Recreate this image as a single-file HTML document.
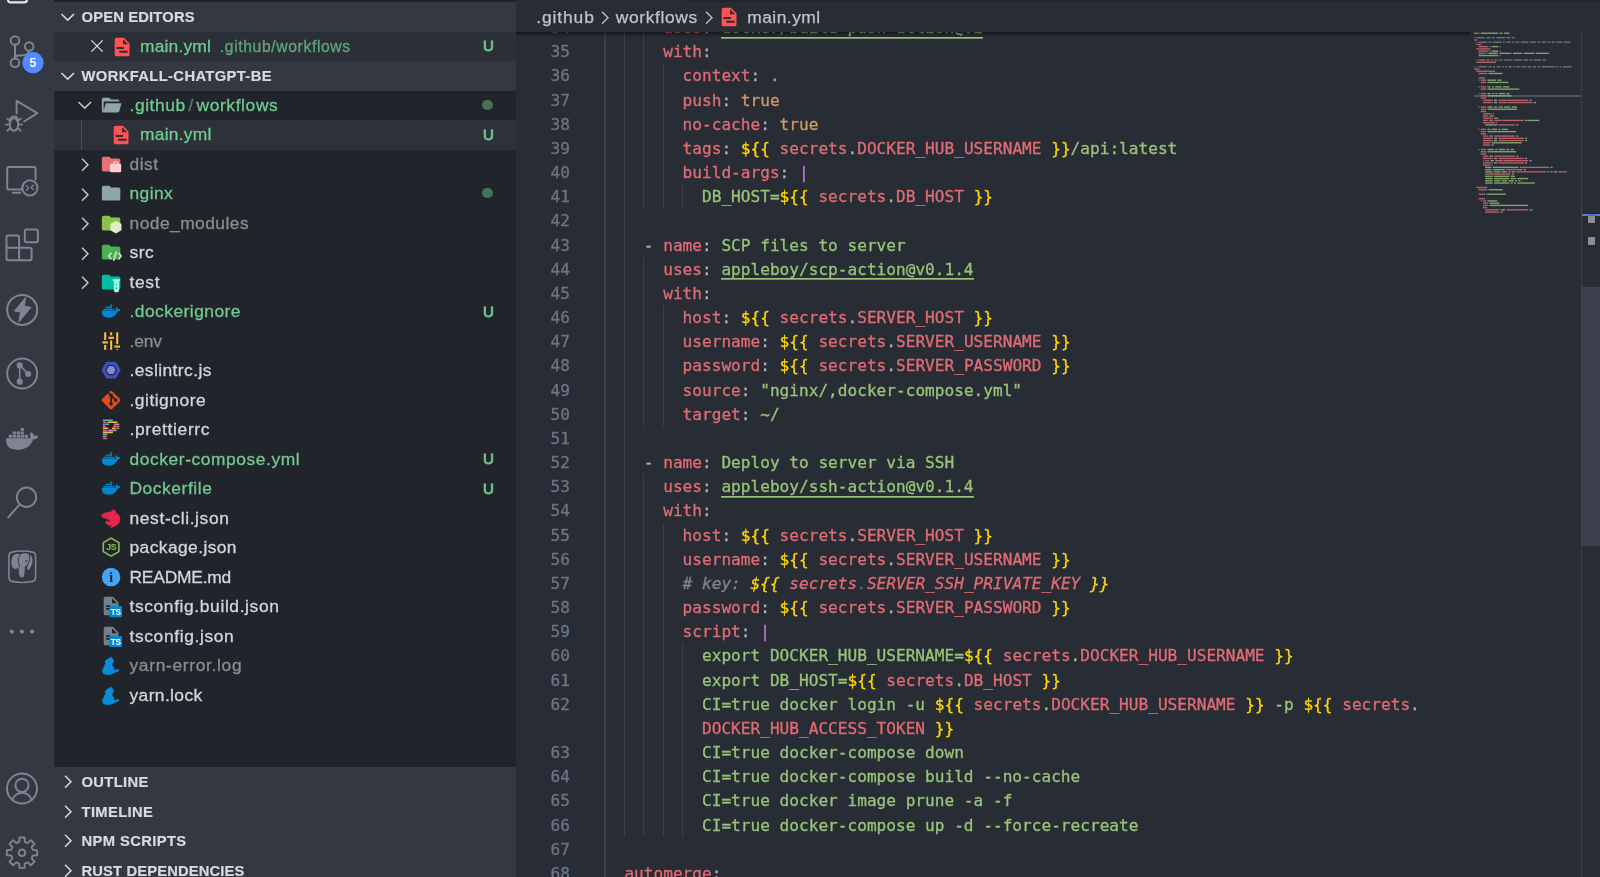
<!DOCTYPE html>
<html lang="en">
<head>
<meta charset="utf-8">
<title>main.yml — workfall-chatgpt-be</title>
<style>
*{box-sizing:border-box;margin:0;padding:0}
html,body{width:1600px;height:877px;overflow:hidden;background:#282c34}
body{position:relative;font-family:"Liberation Sans",sans-serif;-webkit-font-smoothing:antialiased}
#act{will-change:transform;position:absolute;left:0;top:0;width:54px;height:877px;background:#333842}
#act svg{position:absolute;overflow:visible}
#side{will-change:transform;position:absolute;left:54px;top:0;width:462px;height:877px;background:#21252b;overflow:hidden}
#side .topstrip{position:absolute;left:0;top:0;width:462px;height:2px;background:#1d2026}
.hdr{position:absolute;left:0;width:462px;height:29.5px;background:#333842;color:#d7dae0;font-weight:bold;font-size:14.75px;line-height:29.5px;white-space:nowrap}
.hdr span{position:absolute;left:27px;top:1.8px;-webkit-text-stroke:0.2px currentColor}
.hdr svg{position:absolute;left:6px;top:6.5px}
.row{position:absolute;left:0;width:462px;height:29.5px;font-size:17.4px;line-height:29.5px;white-space:nowrap;color:#d4d6db}
.row .t{position:absolute;top:0.3px;-webkit-text-stroke:0.3px currentColor}
.row .ic{position:absolute}
.row .st{position:absolute;left:428.9px;top:-0.2px;font-size:15.1px;color:#70c38d;-webkit-text-stroke:0.9px currentColor}
.row .dot{position:absolute;left:428.4px;top:9.3px;width:10.2px;height:10.2px;border-radius:50%;background:#467358}
.sub{font-size:15.7px;opacity:.75}
.sl{opacity:.55}
.tg{position:absolute;left:27px;top:0;width:1px;height:29.5px;background:#4b5058}
.panes{position:absolute;left:0;top:766.5px;width:462px;height:111px;background:#333842}
.un{color:#73c991}
.ig{color:#8c8c8c}
.chev{position:absolute}
#ed{will-change:transform;position:absolute;left:516px;top:0;width:1084px;height:877px;background:#282c34;overflow:hidden}
#bc{position:absolute;left:0;top:0;width:1084px;height:32px;background:#282c34;z-index:5;color:#c0c4cc;font-size:17.4px;line-height:32px;white-space:nowrap}
#bc .t{position:absolute;top:1.3px;-webkit-text-stroke:0.25px currentColor}
.tabstrip{position:absolute;left:171px;top:0;width:913px;height:1.5px;background:#21252b}
#bcsh{position:absolute;left:0;top:32px;width:954px;height:6px;z-index:4;background:linear-gradient(rgba(0,0,0,.55),rgba(0,0,0,.18) 45%,rgba(0,0,0,0))}
.ln{position:absolute;left:0;width:960px;height:24.14px}
.no{-webkit-text-stroke:0.3px currentColor;position:absolute;left:0;width:54px;top:1px;text-align:right;color:#6b7589;font-family:"DejaVu Sans Mono","Liberation Mono",monospace;font-size:16.11px;line-height:24.14px}
.cd{position:absolute;left:89px;top:1px;font-family:"DejaVu Sans Mono","Liberation Mono",monospace;font-size:16.11px;line-height:24.14px;color:#abb2bf;white-space:pre;-webkit-text-stroke:0.3px currentColor}
.cd.it{font-style:italic}
.g{position:absolute;top:0;width:1.2px;height:24.2px;background:#3b3f4a;margin-left:-0.6px}
.k{color:#e06c75}.p{color:#abb2bf}.s{color:#98c379}.o{color:#d19a66}.b{color:#ffd700}.v{color:#e06c75}.c{color:#7f848e}.cdot{color:#5c6370}.m{color:#c678dd}
.u{padding-bottom:3px;background:linear-gradient(#98c379,#98c379) 0 18.400px/100% 1.700px no-repeat}
#mm{position:absolute;left:954px;top:32px;width:111px;height:845px}
#sb{position:absolute;left:1065px;top:32px;width:19px;height:845px;border-left:1px solid #3a3f49}
</style>
</head>
<body>
<div id="act">
<svg width="54" height="877" viewBox="0 0 54 877" style="left:0;top:0"><path d="M8 -4V0a2.400 2.400 0 0 0 2.400 2.400h14a2.400 2.400 0 0 0 2.400-2.400V-4" fill="none" stroke="#e4e6ee" stroke-width="2.200"/><g fill="none" stroke="#7f8490" stroke-width="2" stroke-linecap="round" stroke-linejoin="round"><circle cx="15" cy="40.500" r="4.300"/><circle cx="29.200" cy="46.500" r="4.300"/><circle cx="15" cy="62.700" r="4.300"/><path d="M15 44.800V58.400M29.200 50.800c0 4-4 4.700-8 4.700h-3c-2 0-3.200 1-3.200 2.900"/><path d="M16.600 113.500V100.800L37.300 113.100 24.200 121.500"/><ellipse cx="14" cy="124.500" rx="4.300" ry="6.200"/><path d="M10 119.200a4.200 4.200 0 0 1 8 0M9.700 124.500H5.800M18.300 124.500H22.200M10.400 121l-3.200-2.300M17.600 121l3.200-2.300M10.400 128l-3.200 2.800M17.600 128l3.200 2.800" stroke-width="1.700"/><path d="M22.500 189.600H9a1.800 1.800 0 0 1-1.800-1.800V168.900a1.800 1.800 0 0 1 1.800-1.800H33.700a1.800 1.800 0 0 1 1.800 1.800V179.500M12.800 192.700H20.200"/><circle cx="29.900" cy="187.900" r="7.600"/><path d="M26.400 185.600l2.300 2.300-2.300 2.300M33.400 185.200l-2.300 2.300 2.300 2.300" stroke-width="1.300"/><path d="M19.100 260.200V237.200a1.800 1.800 0 0 0-1.800-1.800H8.300a1.800 1.800 0 0 0-1.800 1.800V258.400a1.800 1.800 0 0 0 1.800 1.800H29.800a1.800 1.800 0 0 0 1.800-1.800V249.500a1.800 1.800 0 0 0-1.800-1.800H6.500"/><rect x="24.800" y="229.500" width="13.100" height="12.800" rx="1.800"/><circle cx="22.200" cy="309.900" r="15"/><circle cx="22.200" cy="373.500" r="15"/><path d="M19.700 365.400V381.700M19.700 365.400L28.200 374" stroke-width="1.600"/><circle cx="26.500" cy="497.200" r="9.700"/><path d="M19.700 504.400L8.200 517.300" stroke-width="2"/><path d="M8.900 556.500c0-2 .4-3.600 2-4.100 7-1.700 15.700-1.700 22.700 0 1.600.5 2 2.100 2 4.100V577c0 2-.4 3.600-2 4.100-7 1.700-15.700 1.700-22.700 0-1.600-.5-2-2.100-2-4.100z" stroke-width="1.600"/><circle cx="22" cy="788.500" r="15"/><circle cx="22" cy="785.300" r="6.600"/><path d="M12.300 799.800c2-4.600 5.500-7 9.700-7s7.700 2.400 9.700 7"/><circle cx="22" cy="852.700" r="3.300"/></g><polygon points="19.23,841.85 19.39,837.52 24.61,837.52 24.77,841.85 27.71,843.07 30.89,840.13 34.57,843.81 31.63,846.99 32.85,849.93 37.18,850.09 37.18,855.31 32.85,855.47 31.63,858.41 34.57,861.59 30.89,865.27 27.71,862.33 24.77,863.55 24.61,867.88 19.39,867.88 19.23,863.55 16.29,862.33 13.11,865.27 9.43,861.59 12.37,858.41 11.15,855.47 6.82,855.31 6.82,850.09 11.15,849.93 12.37,846.99 9.43,843.81 13.11,840.13 16.29,843.07" fill="none" stroke="#7f8490" stroke-width="1.9" stroke-linejoin="round"/><g fill="#7f8490"><polygon points="25.6,297.6 14.4,310.9 20.5,312.0 18.8,322.0 31.1,307.3 24.3,306.3" stroke="#7f8490" stroke-width="1" stroke-linejoin="round"/><circle cx="19.700" cy="365.400" r="3.100"/><circle cx="28.200" cy="374" r="3"/><circle cx="19.700" cy="381.700" r="3.100"/><path d="M21.81 10.25c-.06-.04-.56-.43-1.64-.43-.28 0-.56.03-.84.08-.21-1.4-1.38-2.11-1.43-2.14l-.29-.17-.18.27c-.24.36-.43.77-.51 1.19-.2.8-.08 1.56.33 2.21-.49.28-1.29.35-1.46.35H2.62c-.34 0-.62.28-.62.63 0 1.15.18 2.3.58 3.38.45 1.19 1.13 2.07 2 2.61.98.6 2.59.94 4.42.94.79 0 1.61-.07 2.42-.22 1.12-.2 2.2-.59 3.19-1.16A8.3 8.3 0 0 0 16.78 16c1.05-1.17 1.67-2.5 2.12-3.65h.19c1.14 0 1.85-.46 2.24-.85.26-.24.45-.53.59-.87l.08-.24-.19-.14m-17.96.99h1.76c.08 0 .16-.07.16-.16V9.5c0-.08-.07-.16-.16-.16H3.85c-.09 0-.16.07-.16.16v1.58c.01.09.07.16.16.16m2.43 0h1.76c.08 0 .16-.07.16-.16V9.5c0-.08-.07-.16-.16-.16H6.28c-.09 0-.16.07-.16.16v1.58c.01.09.07.16.16.16m2.47 0h1.75c.1 0 .17-.07.17-.16V9.5c0-.08-.06-.16-.17-.16H8.75c-.08 0-.15.07-.15.16v1.58c0 .09.06.16.15.16m2.44 0h1.77c.08 0 .15-.07.15-.16V9.5c0-.08-.06-.16-.15-.16h-1.77c-.08 0-.15.07-.15.16v1.58c0 .09.07.16.15.16M6.28 9h1.76c.08 0 .16-.09.16-.18V7.25c0-.09-.07-.16-.16-.16H6.28c-.09 0-.16.06-.16.16v1.57c.01.09.07.18.16.18m2.47 0h1.75c.1 0 .17-.09.17-.18V7.25c0-.09-.06-.16-.17-.16H8.75c-.08 0-.15.06-.15.16v1.57c0 .09.06.18.15.18m2.44 0h1.77c.08 0 .15-.09.15-.18V7.25c0-.09-.07-.16-.15-.16h-1.77c-.08 0-.15.06-.15.16v1.57c0 .09.07.18.15.18m0-2.28h1.77c.08 0 .15-.07.15-.16V5c0-.1-.07-.17-.15-.17h-1.77c-.08 0-.15.06-.15.17v1.56c0 .08.07.16.15.16m2.46 4.52h1.76c.09 0 .16-.07.16-.16V9.5c0-.08-.07-.16-.16-.16h-1.76c-.08 0-.15.07-.15.16v1.58c0 .09.07.16.15.16" transform="translate(2.700,420.600) scale(1.620,1.520)"/><path d="M13 556c1.500-2.300 5-2.800 7.300-1.500 2-1.500 6.200-1.700 8.600-.5 3.300 1.500 4.200 5.500 3.300 9.200-.6 2.600-1.900 5.300-3.300 6.500-.7.600-1.500.3-1.600-.5l-.3-3.600c-.6.400-1.500.5-2.100.4-.2 3.500-.2 7-.8 9.700-.500 2.200-3.800 2.400-4.500.3-.8-2.500-.7-6-1.100-8.500-1 1.200-2.500 1.600-3.800 1.300-1.600-.3-2.600-1.500-3.100-3.600-.6-2.700-.4-6.900 1.400-9.200z"/><g fill="none" stroke="#333842" stroke-width="1"><path d="M20.300 554.500c-1.800 2-2.400 5-1.900 8 .3 1.800 1.300 2.800 1.200 4.700M28.900 554c1.300 2.700 1 6.200-.6 9.300-.7 1.300-.9 2-1 3.100"/><circle cx="26.300" cy="561" r=".6"/></g><circle cx="11.800" cy="631.600" r="2.100"/><circle cx="21.900" cy="631.600" r="2.100"/><circle cx="32.100" cy="631.600" r="2.100"/></g><circle cx="33" cy="62.700" r="10.600" fill="#528bff"/><text x="33" y="67.200" font-family="Liberation Sans, sans-serif" font-weight="bold" font-size="12.500" text-anchor="middle" fill="#f0f3f8">5</text></svg>
</div>
<div id="side">
<div class="hdr" style="top:2.00px"><svg class="chev" width="21.46" height="21.46" viewBox="0 0 16 16" style="left:3.07px;top:4.35px"><polyline points="3.300,6.000 8,10.500 12.700,6.000" fill="none" stroke="#d7dae0" stroke-width="1.150"/></svg><span style="left:27.500px;top:1.1px;letter-spacing:0.170px">OPEN EDITORS</span></div>
<div class="row" style="top:31.50px;background:#2b2f38"><svg class="chev" width="18" height="18" viewBox="0 0 16 16" style="left:34px;top:5.700px"><path d="M3 3l10 10M13 3L3 13" stroke="#d7dae0" stroke-width="1.200" fill="none"/></svg><svg class="ic" width="22.20" height="22.20" viewBox="0 0 24 24" style="left:56.600px;top:4.300px"><path d="M13 9h5.5L13 3.5V9M6 2h8l6 6v12a2 2 0 0 1-2 2H6a2 2 0 0 1-2-2V4c0-1.11.89-2 2-2m12 16v-2H9v2h9m-4-4v-2H6v2h8z" fill="#ff5252"/></svg><span class="t un" style="left:86.00px;letter-spacing:0.192px">main.yml</span><span class="t un sub" style="left:165.80px;letter-spacing:0.627px">.github/workflows</span><span class="st">U</span></div>
<div class="hdr" style="top:61.00px"><svg class="chev" width="21.46" height="21.46" viewBox="0 0 16 16" style="left:3.07px;top:4.35px"><polyline points="3.300,6.000 8,10.500 12.700,6.000" fill="none" stroke="#d7dae0" stroke-width="1.150"/></svg><span style="left:27.500px;top:1.1px;letter-spacing:0.375px">WORKFALL-CHATGPT-BE</span></div>
<div class="row" style="top:90.50px;"><svg class="chev" width="21.46" height="21.46" viewBox="0 0 16 16" style="left:20.30px;top:3.65px"><polyline points="3.300,6.000 8,10.500 12.700,6.000" fill="none" stroke="#c5c5c5" stroke-width="1.150"/></svg><svg class="ic" width="22.20" height="22.20" viewBox="0 0 24 24" style="left:45.80px;top:3.35px"><path d="M19 20H4a2 2 0 0 1-2-2V6c0-1.11.89-2 2-2h6l2 2h7a2 2 0 0 1 2 2H4v10l2.14-8h17.07l-2.28 8.5c-.23.87-1.01 1.5-1.93 1.5z" fill="#90a4ae"/></svg><span class="t un" style="left:75.50px;letter-spacing:0.583px">.github</span><span class="t un sl" style="left:134.50px;letter-spacing:0.000px">/</span><span class="t un" style="left:142.50px;letter-spacing:0.615px">workflows</span><i class="dot"></i></div>
<div class="row" style="top:120.00px;background:#2c313a;"><svg class="ic" width="22.20" height="22.20" viewBox="0 0 24 24" style="left:56.20px;top:3.90px"><path d="M13 9h5.5L13 3.5V9M6 2h8l6 6v12a2 2 0 0 1-2 2H6a2 2 0 0 1-2-2V4c0-1.11.89-2 2-2m12 16v-2H9v2h9m-4-4v-2H6v2h8z" fill="#ff5252"/></svg><span class="t un" style="left:86.00px;letter-spacing:0.249px">main.yml</span><span class="st">U</span><i class="tg"></i></div>
<div class="row" style="top:149.50px;"><svg class="chev" width="21.46" height="21.46" viewBox="0 0 16 16" style="left:20.40px;top:4.70px"><polyline points="6.000,3.500 10.400,8 6.000,12.500" fill="none" stroke="#c5c5c5" stroke-width="1.150"/></svg><svg class="ic" width="22.20" height="22.20" viewBox="0 0 24 24" style="left:45.80px;top:3.35px"><path d="M10 4H4c-1.11 0-2 .89-2 2v12a2 2 0 0 0 2 2h16a2 2 0 0 0 2-2V8a2 2 0 0 0-2-2h-8l-2-2z" fill="#e57373"/><rect x="10.800" y="11.600" width="12.100" height="9.300" rx="1.300" fill="#ffcdd2"/><path d="M14.500 11.800v-1.100a1 1 0 0 1 1-1h2.700a1 1 0 0 1 1 1v1.100" fill="none" stroke="#ffcdd2" stroke-width="1.300"/></svg><span class="t ig" style="left:75.50px;letter-spacing:0.514px">dist</span></div>
<div class="row" style="top:179.00px;"><svg class="chev" width="21.46" height="21.46" viewBox="0 0 16 16" style="left:20.40px;top:4.70px"><polyline points="6.000,3.500 10.400,8 6.000,12.500" fill="none" stroke="#c5c5c5" stroke-width="1.150"/></svg><svg class="ic" width="22.20" height="22.20" viewBox="0 0 24 24" style="left:45.80px;top:3.35px"><path d="M10 4H4c-1.11 0-2 .89-2 2v12a2 2 0 0 0 2 2h16a2 2 0 0 0 2-2V8a2 2 0 0 0-2-2h-8l-2-2z" fill="#90a4ae"/></svg><span class="t un" style="left:75.50px;letter-spacing:0.397px">nginx</span><i class="dot"></i></div>
<div class="row" style="top:208.50px;"><svg class="chev" width="21.46" height="21.46" viewBox="0 0 16 16" style="left:20.40px;top:4.70px"><polyline points="6.000,3.500 10.400,8 6.000,12.500" fill="none" stroke="#c5c5c5" stroke-width="1.150"/></svg><svg class="ic" width="22.20" height="22.20" viewBox="0 0 24 24" style="left:45.80px;top:3.35px"><path d="M10 4H4c-1.11 0-2 .89-2 2v12a2 2 0 0 0 2 2h16a2 2 0 0 0 2-2V8a2 2 0 0 0-2-2h-8l-2-2z" fill="#8bc34a"/><path d="M17.200 9.400l6 3.450v6.900l-6 3.450-6-3.450v-6.900z" fill="#dcedc8"/></svg><span class="t ig" style="left:75.50px;letter-spacing:0.460px">node_modules</span></div>
<div class="row" style="top:238.00px;"><svg class="chev" width="21.46" height="21.46" viewBox="0 0 16 16" style="left:20.40px;top:4.70px"><polyline points="6.000,3.500 10.400,8 6.000,12.500" fill="none" stroke="#c5c5c5" stroke-width="1.150"/></svg><svg class="ic" width="22.20" height="22.20" viewBox="0 0 24 24" style="left:45.80px;top:3.35px"><path d="M10 4H4c-1.11 0-2 .89-2 2v12a2 2 0 0 0 2 2h16a2 2 0 0 0 2-2V8a2 2 0 0 0-2-2h-8l-2-2z" fill="#4caf50"/><path d="M12.300 12.800l-3 3.500 3 3.500M20 12.800l3 3.500-3 3.500M17.700 11.300l-3 10" fill="none" stroke="#c8e6c9" stroke-width="1.800"/></svg><span class="t " style="left:75.50px;letter-spacing:0.553px">src</span></div>
<div class="row" style="top:267.50px;"><svg class="chev" width="21.46" height="21.46" viewBox="0 0 16 16" style="left:20.40px;top:4.70px"><polyline points="6.000,3.500 10.400,8 6.000,12.500" fill="none" stroke="#c5c5c5" stroke-width="1.150"/></svg><svg class="ic" width="22.20" height="22.20" viewBox="0 0 24 24" style="left:45.80px;top:3.35px"><path d="M10 4H4c-1.11 0-2 .89-2 2v12a2 2 0 0 0 2 2h16a2 2 0 0 0 2-2V8a2 2 0 0 0-2-2h-8l-2-2z" fill="#00bfa5"/><path d="M13.800 9h8v1.800h-1.200v9.400a2.800 2.800 0 0 1-5.600 0v-9.400h-1.200z" fill="#a7ffeb"/><circle cx="17.800" cy="14.500" r="1" fill="#00bfa5"/><circle cx="17.800" cy="18.600" r="1.100" fill="#00bfa5"/></svg><span class="t " style="left:75.50px;letter-spacing:0.662px">test</span></div>
<div class="row" style="top:297.00px;"><svg class="ic" width="22.20" height="22.20" viewBox="0 0 24 24" style="left:45.80px;top:3.35px"><path d="M21.81 10.25c-.06-.04-.56-.43-1.64-.43-.28 0-.56.03-.84.08-.21-1.4-1.38-2.11-1.43-2.14l-.29-.17-.18.27c-.24.36-.43.77-.51 1.19-.2.8-.08 1.56.33 2.21-.49.28-1.29.35-1.46.35H2.62c-.34 0-.62.28-.62.63 0 1.15.18 2.3.58 3.38.45 1.19 1.13 2.07 2 2.61.98.6 2.59.94 4.42.94.79 0 1.61-.07 2.42-.22 1.12-.2 2.2-.59 3.19-1.16A8.3 8.3 0 0 0 16.78 16c1.05-1.17 1.67-2.5 2.12-3.65h.19c1.14 0 1.85-.46 2.24-.85.26-.24.45-.53.59-.87l.08-.24-.19-.14m-17.96.99h1.76c.08 0 .16-.07.16-.16V9.5c0-.08-.07-.16-.16-.16H3.85c-.09 0-.16.07-.16.16v1.58c.01.09.07.16.16.16m2.43 0h1.76c.08 0 .16-.07.16-.16V9.5c0-.08-.07-.16-.16-.16H6.28c-.09 0-.16.07-.16.16v1.58c.01.09.07.16.16.16m2.47 0h1.75c.1 0 .17-.07.17-.16V9.5c0-.08-.06-.16-.17-.16H8.75c-.08 0-.15.07-.15.16v1.58c0 .09.06.16.15.16m2.44 0h1.77c.08 0 .15-.07.15-.16V9.5c0-.08-.06-.16-.15-.16h-1.77c-.08 0-.15.07-.15.16v1.58c0 .09.07.16.15.16M6.28 9h1.76c.08 0 .16-.09.16-.18V7.25c0-.09-.07-.16-.16-.16H6.28c-.09 0-.16.06-.16.16v1.57c.01.09.07.18.16.18m2.47 0h1.75c.1 0 .17-.09.17-.18V7.25c0-.09-.06-.16-.17-.16H8.75c-.08 0-.15.06-.15.16v1.57c0 .09.06.18.15.18m2.44 0h1.77c.08 0 .15-.09.15-.18V7.25c0-.09-.07-.16-.15-.16h-1.77c-.08 0-.15.06-.15.16v1.57c0 .09.07.18.15.18m0-2.28h1.77c.08 0 .15-.07.15-.16V5c0-.1-.07-.17-.15-.17h-1.77c-.08 0-.15.06-.15.17v1.56c0 .08.07.16.15.16m2.46 4.52h1.76c.09 0 .16-.07.16-.16V9.5c0-.08-.07-.16-.16-.16h-1.76c-.08 0-.15.07-.15.16v1.58c0 .09.07.16.15.16" fill="#0288d1"/></svg><span class="t un" style="left:75.50px;letter-spacing:0.471px">.dockerignore</span><span class="st">U</span></div>
<div class="row" style="top:326.50px;"><svg class="ic" width="22.20" height="22.20" viewBox="0 0 24 24" style="left:45.80px;top:3.35px"><g fill="#fbc02d"><rect x="4.500" y="2.500" width="2.200" height="19"/><rect x="11" y="2.500" width="2.200" height="19"/><rect x="17.500" y="2.500" width="2.200" height="19"/></g><g fill="#21252b"><rect x="2" y="10.800" width="7.200" height="5.400"/><rect x="8.500" y="5.800" width="7.200" height="5.400"/><rect x="15" y="15.300" width="7.200" height="5.400"/></g><g fill="#fbc02d"><rect x="2.600" y="12.300" width="6" height="2.300"/><rect x="9.100" y="7.300" width="6" height="2.300"/><rect x="15.600" y="16.800" width="6" height="2.300"/></g></svg><span class="t ig" style="left:75.50px;letter-spacing:-0.162px">.env</span></div>
<div class="row" style="top:356.00px;"><svg class="ic" width="22.20" height="22.20" viewBox="0 0 24 24" style="left:45.80px;top:3.35px"><path d="M1.6 12l5.200-9h10.400l5.200 9-5.200 9H6.800z" fill="#4150c0"/><path d="M6.300 12l2.850-4.950h5.700L17.700 12l-2.850 4.950h-5.700z" fill="#7f8ad8" stroke="#232840" stroke-width="1.300"/></svg><span class="t " style="left:75.50px;letter-spacing:0.415px">.eslintrc.js</span></div>
<div class="row" style="top:385.50px;"><svg class="ic" width="22.20" height="22.20" viewBox="0 0 24 24" style="left:45.80px;top:3.35px"><path d="M2.6 10.59 8.38 4.8l1.69 1.7c-.24.85.15 1.78.93 2.23v5.54c-.6.34-1 .99-1 1.73a2 2 0 0 0 2 2 2 2 0 0 0 2-2c0-.74-.4-1.39-1-1.73V9.41l2.07 2.09c-.07.15-.07.32-.07.5a2 2 0 0 0 2 2 2 2 0 0 0 2-2 2 2 0 0 0-2-2c-.18 0-.35 0-.5.07L13.93 7.5a1.98 1.98 0 0 0-1.15-2.34c-.43-.16-.88-.2-1.28-.09L9.8 3.38l.79-.78c.78-.79 2.04-.79 2.82 0l7.99 7.99c.79.78.79 2.04 0 2.82l-7.99 7.99c-.78.79-2.04.79-2.82 0L2.6 13.41c-.79-.78-.79-2.04 0-2.82z" fill="#e64a19"/></svg><span class="t " style="left:75.50px;letter-spacing:0.511px">.gitignore</span></div>
<div class="row" style="top:415.00px;"><svg class="ic" width="22.20" height="22.20" viewBox="0 0 24 24" style="left:45.80px;top:3.35px"><rect x="3.0" y="1.5" width="11.0" height="1.700" rx="0.500" fill="#56b3b4"/><rect x="3.0" y="3.7" width="4.0" height="1.700" rx="0.500" fill="#ea5e5e"/><rect x="8.0" y="3.7" width="11.0" height="1.700" rx="0.500" fill="#f7ba3e"/><rect x="3.0" y="5.9" width="7.0" height="1.700" rx="0.500" fill="#56b3b4"/><rect x="15.0" y="5.9" width="6.0" height="1.700" rx="0.500" fill="#bf85bf"/><rect x="3.0" y="8.1" width="3.0" height="1.700" rx="0.500" fill="#bf85bf"/><rect x="14.0" y="8.1" width="7.0" height="1.700" rx="0.500" fill="#ea5e5e"/><rect x="3.0" y="10.3" width="6.0" height="1.700" rx="0.500" fill="#f7ba3e"/><rect x="13.0" y="10.3" width="4.0" height="1.700" rx="0.500" fill="#f7ba3e"/><rect x="17.5" y="10.3" width="3.5" height="1.700" rx="0.500" fill="#56b3b4"/><rect x="3.0" y="12.5" width="5.0" height="1.700" rx="0.500" fill="#ea5e5e"/><rect x="9.0" y="12.5" width="9.0" height="1.700" rx="0.500" fill="#bf85bf"/><rect x="3.0" y="14.7" width="11.0" height="1.700" rx="0.500" fill="#f7ba3e"/><rect x="3.0" y="16.9" width="5.0" height="1.700" rx="0.500" fill="#56b3b4"/><rect x="3.0" y="19.1" width="4.0" height="1.700" rx="0.500" fill="#bf85bf"/><rect x="3.0" y="21.3" width="5.0" height="1.700" rx="0.500" fill="#ea5e5e"/></svg><span class="t " style="left:75.50px;letter-spacing:0.652px">.prettierrc</span></div>
<div class="row" style="top:444.50px;"><svg class="ic" width="22.20" height="22.20" viewBox="0 0 24 24" style="left:45.80px;top:3.35px"><path d="M21.81 10.25c-.06-.04-.56-.43-1.64-.43-.28 0-.56.03-.84.08-.21-1.4-1.38-2.11-1.43-2.14l-.29-.17-.18.27c-.24.36-.43.77-.51 1.19-.2.8-.08 1.56.33 2.21-.49.28-1.29.35-1.46.35H2.62c-.34 0-.62.28-.62.63 0 1.15.18 2.3.58 3.38.45 1.19 1.13 2.07 2 2.61.98.6 2.59.94 4.42.94.79 0 1.61-.07 2.42-.22 1.12-.2 2.2-.59 3.19-1.16A8.3 8.3 0 0 0 16.78 16c1.05-1.17 1.67-2.5 2.12-3.65h.19c1.14 0 1.85-.46 2.24-.85.26-.24.45-.53.59-.87l.08-.24-.19-.14m-17.96.99h1.76c.08 0 .16-.07.16-.16V9.5c0-.08-.07-.16-.16-.16H3.85c-.09 0-.16.07-.16.16v1.58c.01.09.07.16.16.16m2.43 0h1.76c.08 0 .16-.07.16-.16V9.5c0-.08-.07-.16-.16-.16H6.28c-.09 0-.16.07-.16.16v1.58c.01.09.07.16.16.16m2.47 0h1.75c.1 0 .17-.07.17-.16V9.5c0-.08-.06-.16-.17-.16H8.75c-.08 0-.15.07-.15.16v1.58c0 .09.06.16.15.16m2.44 0h1.77c.08 0 .15-.07.15-.16V9.5c0-.08-.06-.16-.15-.16h-1.77c-.08 0-.15.07-.15.16v1.58c0 .09.07.16.15.16M6.28 9h1.76c.08 0 .16-.09.16-.18V7.25c0-.09-.07-.16-.16-.16H6.28c-.09 0-.16.06-.16.16v1.57c.01.09.07.18.16.18m2.47 0h1.75c.1 0 .17-.09.17-.18V7.25c0-.09-.06-.16-.17-.16H8.75c-.08 0-.15.06-.15.16v1.57c0 .09.06.18.15.18m2.44 0h1.77c.08 0 .15-.09.15-.18V7.25c0-.09-.07-.16-.15-.16h-1.77c-.08 0-.15.06-.15.16v1.57c0 .09.07.18.15.18m0-2.28h1.77c.08 0 .15-.07.15-.16V5c0-.1-.07-.17-.15-.17h-1.77c-.08 0-.15.06-.15.17v1.56c0 .08.07.16.15.16m2.46 4.52h1.76c.09 0 .16-.07.16-.16V9.5c0-.08-.07-.16-.16-.16h-1.76c-.08 0-.15.07-.15.16v1.58c0 .09.07.16.15.16" fill="#0288d1"/></svg><span class="t un" style="left:75.50px;letter-spacing:0.572px">docker-compose.yml</span><span class="st">U</span></div>
<div class="row" style="top:474.00px;"><svg class="ic" width="22.20" height="22.20" viewBox="0 0 24 24" style="left:45.80px;top:3.35px"><path d="M21.81 10.25c-.06-.04-.56-.43-1.64-.43-.28 0-.56.03-.84.08-.21-1.4-1.38-2.11-1.43-2.14l-.29-.17-.18.27c-.24.36-.43.77-.51 1.19-.2.8-.08 1.56.33 2.21-.49.28-1.29.35-1.46.35H2.62c-.34 0-.62.28-.62.63 0 1.15.18 2.3.58 3.38.45 1.19 1.13 2.07 2 2.61.98.6 2.59.94 4.42.94.79 0 1.61-.07 2.42-.22 1.12-.2 2.2-.59 3.19-1.16A8.3 8.3 0 0 0 16.78 16c1.05-1.17 1.67-2.5 2.12-3.65h.19c1.14 0 1.85-.46 2.24-.85.26-.24.45-.53.59-.87l.08-.24-.19-.14m-17.96.99h1.76c.08 0 .16-.07.16-.16V9.5c0-.08-.07-.16-.16-.16H3.85c-.09 0-.16.07-.16.16v1.58c.01.09.07.16.16.16m2.43 0h1.76c.08 0 .16-.07.16-.16V9.5c0-.08-.07-.16-.16-.16H6.28c-.09 0-.16.07-.16.16v1.58c.01.09.07.16.16.16m2.47 0h1.75c.1 0 .17-.07.17-.16V9.5c0-.08-.06-.16-.17-.16H8.75c-.08 0-.15.07-.15.16v1.58c0 .09.06.16.15.16m2.44 0h1.77c.08 0 .15-.07.15-.16V9.5c0-.08-.06-.16-.15-.16h-1.77c-.08 0-.15.07-.15.16v1.58c0 .09.07.16.15.16M6.28 9h1.76c.08 0 .16-.09.16-.18V7.25c0-.09-.07-.16-.16-.16H6.28c-.09 0-.16.06-.16.16v1.57c.01.09.07.18.16.18m2.47 0h1.75c.1 0 .17-.09.17-.18V7.25c0-.09-.06-.16-.17-.16H8.75c-.08 0-.15.06-.15.16v1.57c0 .09.06.18.15.18m2.44 0h1.77c.08 0 .15-.09.15-.18V7.25c0-.09-.07-.16-.15-.16h-1.77c-.08 0-.15.06-.15.16v1.57c0 .09.07.18.15.18m0-2.28h1.77c.08 0 .15-.07.15-.16V5c0-.1-.07-.17-.15-.17h-1.77c-.08 0-.15.06-.15.17v1.56c0 .08.07.16.15.16m2.46 4.52h1.76c.09 0 .16-.07.16-.16V9.5c0-.08-.07-.16-.16-.16h-1.76c-.08 0-.15.07-.15.16v1.58c0 .09.07.16.15.16" fill="#0288d1"/></svg><span class="t un" style="left:75.50px;letter-spacing:0.561px">Dockerfile</span><span class="st">U</span></div>
<div class="row" style="top:503.50px;"><svg class="ic" width="22.20" height="22.20" viewBox="0 0 24 24" style="left:45.80px;top:3.35px"><polygon points="1.60,9.12 4.51,6.94 9.23,5.67 12.86,5.31 13.22,2.95 16.13,3.67 17.58,6.22 16.13,9.12 18.67,7.31 20.85,9.85 21.58,13.12 20.85,16.39 18.67,18.93 15.40,20.75 11.77,22.20 12.86,18.93 11.04,19.66 8.14,19.29 6.32,16.75 7.05,14.93 9.23,16.39 11.04,14.93 9.23,13.12 5.60,12.03 3.05,11.30" fill="#e8254a" stroke="#e8254a" stroke-width="0.8" stroke-linejoin="round"/></svg><span class="t " style="left:75.50px;letter-spacing:0.631px">nest-cli.json</span></div>
<div class="row" style="top:533.00px;"><svg class="ic" width="22.20" height="22.20" viewBox="0 0 24 24" style="left:45.80px;top:3.35px"><path d="M12 2.300l8.400 4.850v9.700L12 21.700l-8.400-4.850v-9.700z" fill="none" stroke="#8bc34a" stroke-width="1.7" stroke-linejoin="round"/><text x="12.100" y="15.600" font-family="Liberation Sans, sans-serif" font-weight="bold" font-size="9.500" text-anchor="middle" fill="#8bc34a" letter-spacing="-0.600">JS</text></svg><span class="t " style="left:75.50px;letter-spacing:0.414px">package.json</span></div>
<div class="row" style="top:562.50px;"><svg class="ic" width="22.20" height="22.20" viewBox="0 0 24 24" style="left:45.80px;top:3.35px"><circle cx="12" cy="12" r="10" fill="#42a5f5"/><text x="12" y="17.300" font-family="Liberation Serif, serif" font-weight="bold" font-size="15" text-anchor="middle" fill="#21252b">i</text></svg><span class="t " style="left:75.50px;letter-spacing:-0.200px">README.md</span></div>
<div class="row" style="top:592.00px;"><svg class="ic" width="22.20" height="22.20" viewBox="0 0 24 24" style="left:45.80px;top:3.35px"><path d="M13 9h5.500L13 3.500V9M6 2h8l6 6v12a2 2 0 0 1-2 2H6a2 2 0 0 1-2-2V4c0-1.110.890-2 2-2m5 9H6.500v2H11zm3 3H6.500v2H14z" fill="#757f8a"/><rect x="10" y="12" width="14" height="12" rx="1.200" fill="#0288d1"/><text x="17" y="21.400" font-family="Liberation Sans, sans-serif" font-weight="bold" font-size="9" text-anchor="middle" fill="#ffffff" letter-spacing="-0.300">TS</text></svg><span class="t " style="left:75.50px;letter-spacing:0.617px">tsconfig.build.json</span></div>
<div class="row" style="top:621.50px;"><svg class="ic" width="22.20" height="22.20" viewBox="0 0 24 24" style="left:45.80px;top:3.35px"><path d="M13 9h5.500L13 3.500V9M6 2h8l6 6v12a2 2 0 0 1-2 2H6a2 2 0 0 1-2-2V4c0-1.110.890-2 2-2m5 9H6.500v2H11zm3 3H6.500v2H14z" fill="#757f8a"/><rect x="10" y="12" width="14" height="12" rx="1.200" fill="#0288d1"/><text x="17" y="21.400" font-family="Liberation Sans, sans-serif" font-weight="bold" font-size="9" text-anchor="middle" fill="#ffffff" letter-spacing="-0.300">TS</text></svg><span class="t " style="left:75.50px;letter-spacing:0.633px">tsconfig.json</span></div>
<div class="row" style="top:651.00px;"><svg class="ic" width="22.20" height="22.20" viewBox="0 0 24 24" style="left:45.80px;top:3.35px"><polygon points="11.59,3.14 13.22,4.96 14.31,6.05 14.31,8.59 13.22,10.77 12.86,12.59 14.31,14.04 15.04,16.22 15.40,18.04 17.58,17.31 19.76,16.77 20.67,17.67 19.04,18.76 16.13,19.85 12.86,21.31 9.23,22.40 6.32,21.67 4.51,21.85 3.42,20.22 2.69,18.04 4.14,14.77 5.23,12.22 6.32,10.41 5.78,8.23 6.32,7.14 8.14,5.68 9.95,4.78" fill="#0a8cd8" stroke="#0a8cd8" stroke-width="0.9" stroke-linejoin="round"/></svg><span class="t ig" style="left:75.50px;letter-spacing:0.669px">yarn-error.log</span></div>
<div class="row" style="top:680.50px;"><svg class="ic" width="22.20" height="22.20" viewBox="0 0 24 24" style="left:45.80px;top:3.35px"><polygon points="11.59,3.14 13.22,4.96 14.31,6.05 14.31,8.59 13.22,10.77 12.86,12.59 14.31,14.04 15.04,16.22 15.40,18.04 17.58,17.31 19.76,16.77 20.67,17.67 19.04,18.76 16.13,19.85 12.86,21.31 9.23,22.40 6.32,21.67 4.51,21.85 3.42,20.22 2.69,18.04 4.14,14.77 5.23,12.22 6.32,10.41 5.78,8.23 6.32,7.14 8.14,5.68 9.95,4.78" fill="#0a8cd8" stroke="#0a8cd8" stroke-width="0.9" stroke-linejoin="round"/></svg><span class="t " style="left:75.50px;letter-spacing:0.389px">yarn.lock</span></div>
<div class="panes"></div>
<div class="hdr" style="top:766.50px"><svg class="chev" width="21.46" height="21.46" viewBox="0 0 16 16" style="left:3.40px;top:4.97px"><polyline points="6.000,3.500 10.400,8 6.000,12.500" fill="none" stroke="#d7dae0" stroke-width="1.150"/></svg><span style="left:27.500px;top:1.8px;letter-spacing:0.340px">OUTLINE</span></div>
<div class="hdr" style="top:796.00px"><svg class="chev" width="21.46" height="21.46" viewBox="0 0 16 16" style="left:3.40px;top:4.97px"><polyline points="6.000,3.500 10.400,8 6.000,12.500" fill="none" stroke="#d7dae0" stroke-width="1.150"/></svg><span style="left:27.500px;top:1.8px;letter-spacing:0.373px">TIMELINE</span></div>
<div class="hdr" style="top:825.50px"><svg class="chev" width="21.46" height="21.46" viewBox="0 0 16 16" style="left:3.40px;top:4.97px"><polyline points="6.000,3.500 10.400,8 6.000,12.500" fill="none" stroke="#d7dae0" stroke-width="1.150"/></svg><span style="left:27.500px;top:1.8px;letter-spacing:0.387px">NPM SCRIPTS</span></div>
<div class="hdr" style="top:855.00px"><svg class="chev" width="21.46" height="21.46" viewBox="0 0 16 16" style="left:3.40px;top:4.97px"><polyline points="6.000,3.500 10.400,8 6.000,12.500" fill="none" stroke="#d7dae0" stroke-width="1.150"/></svg><span style="left:27.500px;top:1.8px;letter-spacing:0.143px">RUST DEPENDENCIES</span></div>
<div class="topstrip"></div>
</div>
<div id="ed">
<div id="bc">
<span class="t" style="left:20.33px;letter-spacing:0.877px">.github</span><svg class="chev" width="21.460" height="21.460" viewBox="0 0 16 16" style="left:78.2px;top:6.500px"><polyline points="6.000,3.500 10.400,8 6.000,12.500" fill="none" stroke="#b4b9c2" stroke-width="1.150"/></svg><span class="t" style="left:99.79px;letter-spacing:0.629px">workflows</span><svg class="chev" width="21.460" height="21.460" viewBox="0 0 16 16" style="left:181.7px;top:6.500px"><polyline points="6.000,3.500 10.400,8 6.000,12.500" fill="none" stroke="#b4b9c2" stroke-width="1.150"/></svg><svg class="ic" width="22.20" height="22.20" viewBox="0 0 24 24" style="left:201.500px;top:5.800px;position:absolute"><path d="M13 9h5.5L13 3.5V9M6 2h8l6 6v12a2 2 0 0 1-2 2H6a2 2 0 0 1-2-2V4c0-1.11.89-2 2-2m12 16v-2H9v2h9m-4-4v-2H6v2h8z" fill="#ff5252"/></svg><span class="t" style="left:231.17px;letter-spacing:0.496px">main.yml</span><i class="tabstrip"></i>
</div>
<div id="bcsh"></div>
<div class="ln" style="top:15.13px"><span class="no">34</span><i class="g" style="left:89.00px"></i><i class="g" style="left:108.40px"></i><i class="g" style="left:127.80px"></i><pre class="cd">      <span class="k">uses</span><span class="p">:</span> <span class="s u">docker/build-push-action@v2</span></pre></div>
<div class="ln" style="top:39.30px"><span class="no">35</span><i class="g" style="left:89.00px"></i><i class="g" style="left:108.40px"></i><i class="g" style="left:127.80px"></i><pre class="cd">      <span class="k">with</span><span class="p">:</span></pre></div>
<div class="ln" style="top:63.46px"><span class="no">36</span><i class="g" style="left:89.00px"></i><i class="g" style="left:108.40px"></i><i class="g" style="left:127.80px"></i><i class="g" style="left:147.20px"></i><pre class="cd">        <span class="k">context</span><span class="p">:</span> <span class="o">.</span></pre></div>
<div class="ln" style="top:87.63px"><span class="no">37</span><i class="g" style="left:89.00px"></i><i class="g" style="left:108.40px"></i><i class="g" style="left:127.80px"></i><i class="g" style="left:147.20px"></i><pre class="cd">        <span class="k">push</span><span class="p">:</span> <span class="o">true</span></pre></div>
<div class="ln" style="top:111.80px"><span class="no">38</span><i class="g" style="left:89.00px"></i><i class="g" style="left:108.40px"></i><i class="g" style="left:127.80px"></i><i class="g" style="left:147.20px"></i><pre class="cd">        <span class="k">no-cache</span><span class="p">:</span> <span class="o">true</span></pre></div>
<div class="ln" style="top:135.96px"><span class="no">39</span><i class="g" style="left:89.00px"></i><i class="g" style="left:108.40px"></i><i class="g" style="left:127.80px"></i><i class="g" style="left:147.20px"></i><pre class="cd">        <span class="k">tags</span><span class="p">:</span> <span class="b">${{</span><span class="s"> </span><span class="v">secrets</span><span class="p">.</span><span class="v">DOCKER_HUB_USERNAME</span><span class="s"> </span><span class="b">}}</span><span class="s">/api:latest</span></pre></div>
<div class="ln" style="top:160.12px"><span class="no">40</span><i class="g" style="left:89.00px"></i><i class="g" style="left:108.40px"></i><i class="g" style="left:127.80px"></i><i class="g" style="left:147.20px"></i><pre class="cd">        <span class="k">build-args</span><span class="p">:</span> <span class="m">|</span></pre></div>
<div class="ln" style="top:184.29px"><span class="no">41</span><i class="g" style="left:89.00px"></i><i class="g" style="left:108.40px"></i><i class="g" style="left:127.80px"></i><i class="g" style="left:147.20px"></i><i class="g" style="left:166.60px"></i><pre class="cd">          <span class="s">DB_HOST=</span><span class="b">${{</span><span class="s"> </span><span class="v">secrets</span><span class="s">.</span><span class="v">DB_HOST</span><span class="s"> </span><span class="b">}}</span></pre></div>
<div class="ln" style="top:208.45px"><span class="no">42</span><i class="g" style="left:89.00px"></i><i class="g" style="left:108.40px"></i><pre class="cd"></pre></div>
<div class="ln" style="top:232.62px"><span class="no">43</span><i class="g" style="left:89.00px"></i><i class="g" style="left:108.40px"></i><pre class="cd">    <span class="p">-</span> <span class="k">name</span><span class="p">:</span> <span class="s">SCP files to server</span></pre></div>
<div class="ln" style="top:256.78px"><span class="no">44</span><i class="g" style="left:89.00px"></i><i class="g" style="left:108.40px"></i><i class="g" style="left:127.80px"></i><pre class="cd">      <span class="k">uses</span><span class="p">:</span> <span class="s u">appleboy/scp-action@v0.1.4</span></pre></div>
<div class="ln" style="top:280.95px"><span class="no">45</span><i class="g" style="left:89.00px"></i><i class="g" style="left:108.40px"></i><i class="g" style="left:127.80px"></i><pre class="cd">      <span class="k">with</span><span class="p">:</span></pre></div>
<div class="ln" style="top:305.12px"><span class="no">46</span><i class="g" style="left:89.00px"></i><i class="g" style="left:108.40px"></i><i class="g" style="left:127.80px"></i><i class="g" style="left:147.20px"></i><pre class="cd">        <span class="k">host</span><span class="p">:</span> <span class="b">${{</span><span class="s"> </span><span class="v">secrets</span><span class="p">.</span><span class="v">SERVER_HOST</span><span class="s"> </span><span class="b">}}</span></pre></div>
<div class="ln" style="top:329.28px"><span class="no">47</span><i class="g" style="left:89.00px"></i><i class="g" style="left:108.40px"></i><i class="g" style="left:127.80px"></i><i class="g" style="left:147.20px"></i><pre class="cd">        <span class="k">username</span><span class="p">:</span> <span class="b">${{</span><span class="s"> </span><span class="v">secrets</span><span class="p">.</span><span class="v">SERVER_USERNAME</span><span class="s"> </span><span class="b">}}</span></pre></div>
<div class="ln" style="top:353.44px"><span class="no">48</span><i class="g" style="left:89.00px"></i><i class="g" style="left:108.40px"></i><i class="g" style="left:127.80px"></i><i class="g" style="left:147.20px"></i><pre class="cd">        <span class="k">password</span><span class="p">:</span> <span class="b">${{</span><span class="s"> </span><span class="v">secrets</span><span class="p">.</span><span class="v">SERVER_PASSWORD</span><span class="s"> </span><span class="b">}}</span></pre></div>
<div class="ln" style="top:377.61px"><span class="no">49</span><i class="g" style="left:89.00px"></i><i class="g" style="left:108.40px"></i><i class="g" style="left:127.80px"></i><i class="g" style="left:147.20px"></i><pre class="cd">        <span class="k">source</span><span class="p">:</span> <span class="s">"nginx/,docker-compose.yml"</span></pre></div>
<div class="ln" style="top:401.77px"><span class="no">50</span><i class="g" style="left:89.00px"></i><i class="g" style="left:108.40px"></i><i class="g" style="left:127.80px"></i><i class="g" style="left:147.20px"></i><pre class="cd">        <span class="k">target</span><span class="p">:</span> <span class="s">~/</span></pre></div>
<div class="ln" style="top:425.94px"><span class="no">51</span><i class="g" style="left:89.00px"></i><i class="g" style="left:108.40px"></i><pre class="cd"></pre></div>
<div class="ln" style="top:450.11px"><span class="no">52</span><i class="g" style="left:89.00px"></i><i class="g" style="left:108.40px"></i><pre class="cd">    <span class="p">-</span> <span class="k">name</span><span class="p">:</span> <span class="s">Deploy to server via SSH</span></pre></div>
<div class="ln" style="top:474.27px"><span class="no">53</span><i class="g" style="left:89.00px"></i><i class="g" style="left:108.40px"></i><i class="g" style="left:127.80px"></i><pre class="cd">      <span class="k">uses</span><span class="p">:</span> <span class="s u">appleboy/ssh-action@v0.1.4</span></pre></div>
<div class="ln" style="top:498.44px"><span class="no">54</span><i class="g" style="left:89.00px"></i><i class="g" style="left:108.40px"></i><i class="g" style="left:127.80px"></i><pre class="cd">      <span class="k">with</span><span class="p">:</span></pre></div>
<div class="ln" style="top:522.60px"><span class="no">55</span><i class="g" style="left:89.00px"></i><i class="g" style="left:108.40px"></i><i class="g" style="left:127.80px"></i><i class="g" style="left:147.20px"></i><pre class="cd">        <span class="k">host</span><span class="p">:</span> <span class="b">${{</span><span class="s"> </span><span class="v">secrets</span><span class="p">.</span><span class="v">SERVER_HOST</span><span class="s"> </span><span class="b">}}</span></pre></div>
<div class="ln" style="top:546.76px"><span class="no">56</span><i class="g" style="left:89.00px"></i><i class="g" style="left:108.40px"></i><i class="g" style="left:127.80px"></i><i class="g" style="left:147.20px"></i><pre class="cd">        <span class="k">username</span><span class="p">:</span> <span class="b">${{</span><span class="s"> </span><span class="v">secrets</span><span class="p">.</span><span class="v">SERVER_USERNAME</span><span class="s"> </span><span class="b">}}</span></pre></div>
<div class="ln" style="top:570.93px"><span class="no">57</span><i class="g" style="left:89.00px"></i><i class="g" style="left:108.40px"></i><i class="g" style="left:127.80px"></i><i class="g" style="left:147.20px"></i><pre class="cd it">        <span class="c"># key: </span><span class="b">${{</span><span class="c"> </span><span class="v">secrets</span><span class="cdot">.</span><span class="v">SERVER_SSH_PRIVATE_KEY</span><span class="c"> </span><span class="b">}}</span></pre></div>
<div class="ln" style="top:595.09px"><span class="no">58</span><i class="g" style="left:89.00px"></i><i class="g" style="left:108.40px"></i><i class="g" style="left:127.80px"></i><i class="g" style="left:147.20px"></i><pre class="cd">        <span class="k">password</span><span class="p">:</span> <span class="b">${{</span><span class="s"> </span><span class="v">secrets</span><span class="p">.</span><span class="v">SERVER_PASSWORD</span><span class="s"> </span><span class="b">}}</span></pre></div>
<div class="ln" style="top:619.26px"><span class="no">59</span><i class="g" style="left:89.00px"></i><i class="g" style="left:108.40px"></i><i class="g" style="left:127.80px"></i><i class="g" style="left:147.20px"></i><pre class="cd">        <span class="k">script</span><span class="p">:</span> <span class="m">|</span></pre></div>
<div class="ln" style="top:643.42px"><span class="no">60</span><i class="g" style="left:89.00px"></i><i class="g" style="left:108.40px"></i><i class="g" style="left:127.80px"></i><i class="g" style="left:147.20px"></i><i class="g" style="left:166.60px"></i><pre class="cd">          <span class="s">export DOCKER_HUB_USERNAME=</span><span class="b">${{</span><span class="s"> </span><span class="v">secrets</span><span class="s">.</span><span class="v">DOCKER_HUB_USERNAME</span><span class="s"> </span><span class="b">}}</span></pre></div>
<div class="ln" style="top:667.59px"><span class="no">61</span><i class="g" style="left:89.00px"></i><i class="g" style="left:108.40px"></i><i class="g" style="left:127.80px"></i><i class="g" style="left:147.20px"></i><i class="g" style="left:166.60px"></i><pre class="cd">          <span class="s">export DB_HOST=</span><span class="b">${{</span><span class="s"> </span><span class="v">secrets</span><span class="s">.</span><span class="v">DB_HOST</span><span class="s"> </span><span class="b">}}</span></pre></div>
<div class="ln" style="top:691.75px"><span class="no">62</span><i class="g" style="left:89.00px"></i><i class="g" style="left:108.40px"></i><i class="g" style="left:127.80px"></i><i class="g" style="left:147.20px"></i><i class="g" style="left:166.60px"></i><pre class="cd">          <span class="s">CI=true docker login -u </span><span class="b">${{</span><span class="s"> </span><span class="v">secrets</span><span class="s">.</span><span class="v">DOCKER_HUB_USERNAME</span><span class="s"> </span><span class="b">}}</span><span class="s"> -p </span><span class="b">${{</span><span class="s"> </span><span class="v">secrets</span><span class="s">.</span></pre></div>
<div class="ln" style="top:715.92px"><i class="g" style="left:89.00px"></i><i class="g" style="left:108.40px"></i><i class="g" style="left:127.80px"></i><i class="g" style="left:147.20px"></i><i class="g" style="left:166.60px"></i><pre class="cd">          <span class="v">DOCKER_HUB_ACCESS_TOKEN</span><span class="s"> </span><span class="b">}}</span></pre></div>
<div class="ln" style="top:740.08px"><span class="no">63</span><i class="g" style="left:89.00px"></i><i class="g" style="left:108.40px"></i><i class="g" style="left:127.80px"></i><i class="g" style="left:147.20px"></i><i class="g" style="left:166.60px"></i><pre class="cd">          <span class="s">CI=true docker-compose down</span></pre></div>
<div class="ln" style="top:764.25px"><span class="no">64</span><i class="g" style="left:89.00px"></i><i class="g" style="left:108.40px"></i><i class="g" style="left:127.80px"></i><i class="g" style="left:147.20px"></i><i class="g" style="left:166.60px"></i><pre class="cd">          <span class="s">CI=true docker-compose build --no-cache</span></pre></div>
<div class="ln" style="top:788.41px"><span class="no">65</span><i class="g" style="left:89.00px"></i><i class="g" style="left:108.40px"></i><i class="g" style="left:127.80px"></i><i class="g" style="left:147.20px"></i><i class="g" style="left:166.60px"></i><pre class="cd">          <span class="s">CI=true docker image prune -a -f</span></pre></div>
<div class="ln" style="top:812.58px"><span class="no">66</span><i class="g" style="left:89.00px"></i><i class="g" style="left:108.40px"></i><i class="g" style="left:127.80px"></i><i class="g" style="left:147.20px"></i><i class="g" style="left:166.60px"></i><pre class="cd">          <span class="s">CI=true docker-compose up -d --force-recreate</span></pre></div>
<div class="ln" style="top:836.74px"><span class="no">67</span><i class="g" style="left:89.00px"></i><pre class="cd"></pre></div>
<div class="ln" style="top:860.91px"><span class="no">68</span><i class="g" style="left:89.00px"></i><pre class="cd">  <span class="k">automerge</span><span class="p">:</span></pre></div>
<i style="position:absolute;left:958px;top:94.900px;width:107.300px;height:2.100px;background:#4d5159"></i>
<svg id="mm" viewBox="0 0 111 845" opacity="0.8"><rect x="4.10" y="0.55" width="4.19" height="1.35" fill="#e06c75"/><rect x="8.54" y="0.55" width="0.86" height="1.35" fill="#abb2bf"/><rect x="10.75" y="0.55" width="17.49" height="1.35" fill="#98c379"/><rect x="29.61" y="0.55" width="3.08" height="1.35" fill="#98c379"/><rect x="34.04" y="0.55" width="5.29" height="1.35" fill="#98c379"/><rect x="4.10" y="5.02" width="0.86" height="1.35" fill="#7f848e"/><rect x="6.32" y="5.02" width="8.62" height="1.35" fill="#7f848e"/><rect x="16.30" y="5.02" width="4.19" height="1.35" fill="#7f848e"/><rect x="21.84" y="5.02" width="3.08" height="1.35" fill="#7f848e"/><rect x="26.28" y="5.02" width="8.62" height="1.35" fill="#7f848e"/><rect x="36.26" y="5.02" width="4.19" height="1.35" fill="#7f848e"/><rect x="41.81" y="5.02" width="3.08" height="1.35" fill="#7f848e"/><rect x="4.10" y="7.26" width="1.97" height="1.35" fill="#e06c75"/><rect x="6.32" y="7.26" width="0.86" height="1.35" fill="#abb2bf"/><rect x="6.32" y="9.49" width="0.86" height="1.35" fill="#7f848e"/><rect x="8.54" y="9.49" width="8.62" height="1.35" fill="#7f848e"/><rect x="18.52" y="9.49" width="3.08" height="1.35" fill="#7f848e"/><rect x="22.95" y="9.49" width="8.62" height="1.35" fill="#7f848e"/><rect x="32.93" y="9.49" width="1.97" height="1.35" fill="#7f848e"/><rect x="36.26" y="9.49" width="4.19" height="1.35" fill="#7f848e"/><rect x="41.81" y="9.49" width="1.97" height="1.35" fill="#7f848e"/><rect x="45.13" y="9.49" width="4.19" height="1.35" fill="#7f848e"/><rect x="50.68" y="9.49" width="7.51" height="1.35" fill="#7f848e"/><rect x="59.55" y="9.49" width="6.40" height="1.35" fill="#7f848e"/><rect x="67.31" y="9.49" width="3.08" height="1.35" fill="#7f848e"/><rect x="71.75" y="9.49" width="4.19" height="1.35" fill="#7f848e"/><rect x="77.29" y="9.49" width="3.08" height="1.35" fill="#7f848e"/><rect x="81.73" y="9.49" width="3.08" height="1.35" fill="#7f848e"/><rect x="86.17" y="9.49" width="6.40" height="1.35" fill="#7f848e"/><rect x="93.93" y="9.49" width="6.40" height="1.35" fill="#7f848e"/><rect x="6.32" y="11.73" width="4.19" height="1.35" fill="#e06c75"/><rect x="10.75" y="11.73" width="0.86" height="1.35" fill="#abb2bf"/><rect x="8.54" y="13.97" width="8.62" height="1.35" fill="#e06c75"/><rect x="17.41" y="13.97" width="0.86" height="1.35" fill="#abb2bf"/><rect x="19.63" y="13.97" width="0.86" height="1.35" fill="#abb2bf"/><rect x="21.84" y="13.97" width="6.40" height="1.35" fill="#98c379"/><rect x="29.61" y="13.97" width="0.86" height="1.35" fill="#abb2bf"/><rect x="6.32" y="16.20" width="13.06" height="1.35" fill="#e06c75"/><rect x="19.63" y="16.20" width="0.86" height="1.35" fill="#abb2bf"/><rect x="8.54" y="18.44" width="8.62" height="1.35" fill="#e06c75"/><rect x="17.41" y="18.44" width="0.86" height="1.35" fill="#abb2bf"/><rect x="19.63" y="18.44" width="0.86" height="1.35" fill="#abb2bf"/><rect x="21.84" y="18.44" width="6.40" height="1.35" fill="#98c379"/><rect x="29.61" y="18.44" width="0.86" height="1.35" fill="#abb2bf"/><rect x="8.54" y="20.67" width="5.29" height="1.35" fill="#e06c75"/><rect x="14.08" y="20.67" width="0.86" height="1.35" fill="#abb2bf"/><rect x="16.30" y="20.67" width="0.86" height="1.35" fill="#abb2bf"/><rect x="18.52" y="20.67" width="8.62" height="1.35" fill="#98c379"/><rect x="27.39" y="20.67" width="0.86" height="1.35" fill="#abb2bf"/><rect x="29.61" y="20.67" width="10.84" height="1.35" fill="#98c379"/><rect x="40.70" y="20.67" width="0.86" height="1.35" fill="#abb2bf"/><rect x="42.91" y="20.67" width="8.62" height="1.35" fill="#98c379"/><rect x="51.79" y="20.67" width="0.86" height="1.35" fill="#abb2bf"/><rect x="54.00" y="20.67" width="9.73" height="1.35" fill="#98c379"/><rect x="63.99" y="20.67" width="0.86" height="1.35" fill="#abb2bf"/><rect x="66.20" y="20.67" width="11.95" height="1.35" fill="#98c379"/><rect x="78.40" y="20.67" width="0.86" height="1.35" fill="#abb2bf"/><rect x="8.54" y="22.91" width="19.71" height="1.35" fill="#98c379"/><rect x="29.61" y="22.91" width="0.86" height="1.35" fill="#abb2bf"/><rect x="6.32" y="27.38" width="0.86" height="1.35" fill="#7f848e"/><rect x="8.54" y="27.38" width="6.40" height="1.35" fill="#7f848e"/><rect x="16.30" y="27.38" width="3.08" height="1.35" fill="#7f848e"/><rect x="20.73" y="27.38" width="1.97" height="1.35" fill="#7f848e"/><rect x="24.06" y="27.38" width="3.08" height="1.35" fill="#7f848e"/><rect x="28.50" y="27.38" width="4.19" height="1.35" fill="#7f848e"/><rect x="34.04" y="27.38" width="8.62" height="1.35" fill="#7f848e"/><rect x="44.02" y="27.38" width="8.62" height="1.35" fill="#7f848e"/><rect x="54.00" y="27.38" width="4.19" height="1.35" fill="#7f848e"/><rect x="59.55" y="27.38" width="3.08" height="1.35" fill="#7f848e"/><rect x="63.99" y="27.38" width="7.51" height="1.35" fill="#7f848e"/><rect x="72.86" y="27.38" width="3.08" height="1.35" fill="#7f848e"/><rect x="6.32" y="29.62" width="18.60" height="1.35" fill="#e06c75"/><rect x="25.17" y="29.62" width="0.86" height="1.35" fill="#abb2bf"/><rect x="4.10" y="34.09" width="0.86" height="1.35" fill="#7f848e"/><rect x="6.32" y="34.09" width="0.86" height="1.35" fill="#7f848e"/><rect x="8.54" y="34.09" width="8.62" height="1.35" fill="#7f848e"/><rect x="18.52" y="34.09" width="3.08" height="1.35" fill="#7f848e"/><rect x="22.95" y="34.09" width="1.97" height="1.35" fill="#7f848e"/><rect x="26.28" y="34.09" width="4.19" height="1.35" fill="#7f848e"/><rect x="31.82" y="34.09" width="1.97" height="1.35" fill="#7f848e"/><rect x="35.15" y="34.09" width="1.97" height="1.35" fill="#7f848e"/><rect x="38.48" y="34.09" width="3.08" height="1.35" fill="#7f848e"/><rect x="42.91" y="34.09" width="1.97" height="1.35" fill="#7f848e"/><rect x="46.24" y="34.09" width="4.19" height="1.35" fill="#7f848e"/><rect x="51.79" y="34.09" width="4.19" height="1.35" fill="#7f848e"/><rect x="57.33" y="34.09" width="4.19" height="1.35" fill="#7f848e"/><rect x="62.88" y="34.09" width="3.08" height="1.35" fill="#7f848e"/><rect x="67.31" y="34.09" width="3.08" height="1.35" fill="#7f848e"/><rect x="71.75" y="34.09" width="13.06" height="1.35" fill="#7f848e"/><rect x="86.17" y="34.09" width="1.97" height="1.35" fill="#7f848e"/><rect x="89.49" y="34.09" width="1.97" height="1.35" fill="#7f848e"/><rect x="92.82" y="34.09" width="8.62" height="1.35" fill="#7f848e"/><rect x="4.10" y="36.33" width="4.19" height="1.35" fill="#e06c75"/><rect x="8.54" y="36.33" width="0.86" height="1.35" fill="#abb2bf"/><rect x="6.32" y="38.56" width="17.49" height="1.35" fill="#e06c75"/><rect x="24.06" y="38.56" width="0.86" height="1.35" fill="#abb2bf"/><rect x="8.54" y="40.80" width="7.51" height="1.35" fill="#e06c75"/><rect x="16.30" y="40.80" width="0.86" height="1.35" fill="#abb2bf"/><rect x="18.52" y="40.80" width="14.17" height="1.35" fill="#98c379"/><rect x="8.54" y="45.27" width="5.29" height="1.35" fill="#e06c75"/><rect x="14.08" y="45.27" width="0.86" height="1.35" fill="#abb2bf"/><rect x="8.54" y="47.51" width="0.86" height="1.35" fill="#abb2bf"/><rect x="10.75" y="47.51" width="4.19" height="1.35" fill="#e06c75"/><rect x="15.19" y="47.51" width="0.86" height="1.35" fill="#abb2bf"/><rect x="17.41" y="47.51" width="8.62" height="1.35" fill="#98c379"/><rect x="27.39" y="47.51" width="4.19" height="1.35" fill="#98c379"/><rect x="10.75" y="49.74" width="4.19" height="1.35" fill="#e06c75"/><rect x="15.19" y="49.74" width="0.86" height="1.35" fill="#abb2bf"/><rect x="17.41" y="49.74" width="20.82" height="1.35" fill="#98c379"/><rect x="8.54" y="54.21" width="0.86" height="1.35" fill="#abb2bf"/><rect x="10.75" y="54.21" width="4.19" height="1.35" fill="#e06c75"/><rect x="15.19" y="54.21" width="0.86" height="1.35" fill="#abb2bf"/><rect x="17.41" y="54.21" width="3.08" height="1.35" fill="#98c379"/><rect x="21.84" y="54.21" width="1.97" height="1.35" fill="#98c379"/><rect x="25.17" y="54.21" width="6.40" height="1.35" fill="#98c379"/><rect x="32.93" y="54.21" width="6.40" height="1.35" fill="#98c379"/><rect x="10.75" y="56.45" width="4.19" height="1.35" fill="#e06c75"/><rect x="15.19" y="56.45" width="0.86" height="1.35" fill="#abb2bf"/><rect x="17.41" y="56.45" width="31.91" height="1.35" fill="#98c379"/><rect x="8.54" y="60.92" width="0.86" height="1.35" fill="#abb2bf"/><rect x="10.75" y="60.92" width="4.19" height="1.35" fill="#e06c75"/><rect x="15.19" y="60.92" width="0.86" height="1.35" fill="#abb2bf"/><rect x="17.41" y="60.92" width="3.08" height="1.35" fill="#98c379"/><rect x="21.84" y="60.92" width="1.97" height="1.35" fill="#98c379"/><rect x="25.17" y="60.92" width="1.97" height="1.35" fill="#98c379"/><rect x="28.50" y="60.92" width="6.40" height="1.35" fill="#98c379"/><rect x="36.26" y="60.92" width="3.08" height="1.35" fill="#98c379"/><rect x="10.75" y="63.16" width="4.19" height="1.35" fill="#e06c75"/><rect x="15.19" y="63.16" width="0.86" height="1.35" fill="#abb2bf"/><rect x="17.41" y="63.16" width="24.15" height="1.35" fill="#98c379"/><rect x="10.75" y="65.39" width="4.19" height="1.35" fill="#e06c75"/><rect x="15.19" y="65.39" width="0.86" height="1.35" fill="#abb2bf"/><rect x="12.97" y="67.63" width="8.62" height="1.35" fill="#e06c75"/><rect x="21.84" y="67.63" width="0.86" height="1.35" fill="#abb2bf"/><rect x="24.06" y="67.63" width="3.08" height="1.35" fill="#abb2bf"/><rect x="28.50" y="67.63" width="7.51" height="1.35" fill="#e06c75"/><rect x="36.26" y="67.63" width="0.86" height="1.35" fill="#abb2bf"/><rect x="37.37" y="67.63" width="20.82" height="1.35" fill="#e06c75"/><rect x="59.55" y="67.63" width="1.97" height="1.35" fill="#abb2bf"/><rect x="12.97" y="69.87" width="8.62" height="1.35" fill="#e06c75"/><rect x="21.84" y="69.87" width="0.86" height="1.35" fill="#abb2bf"/><rect x="24.06" y="69.87" width="3.08" height="1.35" fill="#abb2bf"/><rect x="28.50" y="69.87" width="7.51" height="1.35" fill="#e06c75"/><rect x="36.26" y="69.87" width="0.86" height="1.35" fill="#abb2bf"/><rect x="37.37" y="69.87" width="25.26" height="1.35" fill="#e06c75"/><rect x="63.99" y="69.87" width="1.97" height="1.35" fill="#abb2bf"/><rect x="8.54" y="74.34" width="0.86" height="1.35" fill="#abb2bf"/><rect x="10.75" y="74.34" width="4.19" height="1.35" fill="#e06c75"/><rect x="15.19" y="74.34" width="0.86" height="1.35" fill="#abb2bf"/><rect x="17.41" y="74.34" width="5.29" height="1.35" fill="#98c379"/><rect x="24.06" y="74.34" width="3.08" height="1.35" fill="#98c379"/><rect x="28.50" y="74.34" width="4.19" height="1.35" fill="#98c379"/><rect x="34.04" y="74.34" width="6.40" height="1.35" fill="#98c379"/><rect x="41.81" y="74.34" width="5.29" height="1.35" fill="#98c379"/><rect x="10.75" y="76.57" width="4.19" height="1.35" fill="#e06c75"/><rect x="15.19" y="76.57" width="0.86" height="1.35" fill="#abb2bf"/><rect x="17.41" y="76.57" width="29.69" height="1.35" fill="#98c379"/><rect x="10.75" y="78.81" width="4.19" height="1.35" fill="#e06c75"/><rect x="15.19" y="78.81" width="0.86" height="1.35" fill="#abb2bf"/><rect x="12.97" y="81.05" width="7.51" height="1.35" fill="#e06c75"/><rect x="20.73" y="81.05" width="0.86" height="1.35" fill="#abb2bf"/><rect x="22.95" y="81.05" width="0.86" height="1.35" fill="#d19a66"/><rect x="12.97" y="83.28" width="4.19" height="1.35" fill="#e06c75"/><rect x="17.41" y="83.28" width="0.86" height="1.35" fill="#abb2bf"/><rect x="19.63" y="83.28" width="4.19" height="1.35" fill="#d19a66"/><rect x="12.97" y="85.52" width="8.62" height="1.35" fill="#e06c75"/><rect x="21.84" y="85.52" width="0.86" height="1.35" fill="#abb2bf"/><rect x="24.06" y="85.52" width="4.19" height="1.35" fill="#d19a66"/><rect x="12.97" y="87.75" width="4.19" height="1.35" fill="#e06c75"/><rect x="17.41" y="87.75" width="0.86" height="1.35" fill="#abb2bf"/><rect x="19.63" y="87.75" width="3.08" height="1.35" fill="#abb2bf"/><rect x="24.06" y="87.75" width="7.51" height="1.35" fill="#e06c75"/><rect x="31.82" y="87.75" width="0.86" height="1.35" fill="#abb2bf"/><rect x="32.93" y="87.75" width="20.82" height="1.35" fill="#e06c75"/><rect x="55.11" y="87.75" width="1.97" height="1.35" fill="#abb2bf"/><rect x="57.33" y="87.75" width="11.95" height="1.35" fill="#98c379"/><rect x="12.97" y="89.99" width="10.84" height="1.35" fill="#e06c75"/><rect x="24.06" y="89.99" width="0.86" height="1.35" fill="#abb2bf"/><rect x="26.28" y="89.99" width="0.86" height="1.35" fill="#c678dd"/><rect x="15.19" y="92.23" width="8.62" height="1.35" fill="#98c379"/><rect x="24.06" y="92.23" width="3.08" height="1.35" fill="#abb2bf"/><rect x="28.50" y="92.23" width="7.51" height="1.35" fill="#e06c75"/><rect x="36.26" y="92.23" width="0.86" height="1.35" fill="#98c379"/><rect x="37.37" y="92.23" width="7.51" height="1.35" fill="#e06c75"/><rect x="46.24" y="92.23" width="1.97" height="1.35" fill="#abb2bf"/><rect x="8.54" y="96.70" width="0.86" height="1.35" fill="#abb2bf"/><rect x="10.75" y="96.70" width="4.19" height="1.35" fill="#e06c75"/><rect x="15.19" y="96.70" width="0.86" height="1.35" fill="#abb2bf"/><rect x="17.41" y="96.70" width="3.08" height="1.35" fill="#98c379"/><rect x="21.84" y="96.70" width="5.29" height="1.35" fill="#98c379"/><rect x="28.50" y="96.70" width="1.97" height="1.35" fill="#98c379"/><rect x="31.82" y="96.70" width="6.40" height="1.35" fill="#98c379"/><rect x="10.75" y="98.93" width="4.19" height="1.35" fill="#e06c75"/><rect x="15.19" y="98.93" width="0.86" height="1.35" fill="#abb2bf"/><rect x="17.41" y="98.93" width="28.58" height="1.35" fill="#98c379"/><rect x="10.75" y="101.17" width="4.19" height="1.35" fill="#e06c75"/><rect x="15.19" y="101.17" width="0.86" height="1.35" fill="#abb2bf"/><rect x="12.97" y="103.41" width="4.19" height="1.35" fill="#e06c75"/><rect x="17.41" y="103.41" width="0.86" height="1.35" fill="#abb2bf"/><rect x="19.63" y="103.41" width="3.08" height="1.35" fill="#abb2bf"/><rect x="24.06" y="103.41" width="7.51" height="1.35" fill="#e06c75"/><rect x="31.82" y="103.41" width="0.86" height="1.35" fill="#abb2bf"/><rect x="32.93" y="103.41" width="11.95" height="1.35" fill="#e06c75"/><rect x="46.24" y="103.41" width="1.97" height="1.35" fill="#abb2bf"/><rect x="12.97" y="105.64" width="8.62" height="1.35" fill="#e06c75"/><rect x="21.84" y="105.64" width="0.86" height="1.35" fill="#abb2bf"/><rect x="24.06" y="105.64" width="3.08" height="1.35" fill="#abb2bf"/><rect x="28.50" y="105.64" width="7.51" height="1.35" fill="#e06c75"/><rect x="36.26" y="105.64" width="0.86" height="1.35" fill="#abb2bf"/><rect x="37.37" y="105.64" width="16.38" height="1.35" fill="#e06c75"/><rect x="55.11" y="105.64" width="1.97" height="1.35" fill="#abb2bf"/><rect x="12.97" y="107.88" width="8.62" height="1.35" fill="#e06c75"/><rect x="21.84" y="107.88" width="0.86" height="1.35" fill="#abb2bf"/><rect x="24.06" y="107.88" width="3.08" height="1.35" fill="#abb2bf"/><rect x="28.50" y="107.88" width="7.51" height="1.35" fill="#e06c75"/><rect x="36.26" y="107.88" width="0.86" height="1.35" fill="#abb2bf"/><rect x="37.37" y="107.88" width="16.38" height="1.35" fill="#e06c75"/><rect x="55.11" y="107.88" width="1.97" height="1.35" fill="#abb2bf"/><rect x="12.97" y="110.11" width="6.40" height="1.35" fill="#e06c75"/><rect x="19.63" y="110.11" width="0.86" height="1.35" fill="#abb2bf"/><rect x="21.84" y="110.11" width="29.69" height="1.35" fill="#98c379"/><rect x="12.97" y="112.35" width="6.40" height="1.35" fill="#e06c75"/><rect x="19.63" y="112.35" width="0.86" height="1.35" fill="#abb2bf"/><rect x="21.84" y="112.35" width="1.97" height="1.35" fill="#98c379"/><rect x="8.54" y="116.82" width="0.86" height="1.35" fill="#abb2bf"/><rect x="10.75" y="116.82" width="4.19" height="1.35" fill="#e06c75"/><rect x="15.19" y="116.82" width="0.86" height="1.35" fill="#abb2bf"/><rect x="17.41" y="116.82" width="6.40" height="1.35" fill="#98c379"/><rect x="25.17" y="116.82" width="1.97" height="1.35" fill="#98c379"/><rect x="28.50" y="116.82" width="6.40" height="1.35" fill="#98c379"/><rect x="36.26" y="116.82" width="3.08" height="1.35" fill="#98c379"/><rect x="40.70" y="116.82" width="3.08" height="1.35" fill="#98c379"/><rect x="10.75" y="119.06" width="4.19" height="1.35" fill="#e06c75"/><rect x="15.19" y="119.06" width="0.86" height="1.35" fill="#abb2bf"/><rect x="17.41" y="119.06" width="28.58" height="1.35" fill="#98c379"/><rect x="10.75" y="121.29" width="4.19" height="1.35" fill="#e06c75"/><rect x="15.19" y="121.29" width="0.86" height="1.35" fill="#abb2bf"/><rect x="12.97" y="123.53" width="4.19" height="1.35" fill="#e06c75"/><rect x="17.41" y="123.53" width="0.86" height="1.35" fill="#abb2bf"/><rect x="19.63" y="123.53" width="3.08" height="1.35" fill="#abb2bf"/><rect x="24.06" y="123.53" width="7.51" height="1.35" fill="#e06c75"/><rect x="31.82" y="123.53" width="0.86" height="1.35" fill="#abb2bf"/><rect x="32.93" y="123.53" width="11.95" height="1.35" fill="#e06c75"/><rect x="46.24" y="123.53" width="1.97" height="1.35" fill="#abb2bf"/><rect x="12.97" y="125.77" width="8.62" height="1.35" fill="#e06c75"/><rect x="21.84" y="125.77" width="0.86" height="1.35" fill="#abb2bf"/><rect x="24.06" y="125.77" width="3.08" height="1.35" fill="#abb2bf"/><rect x="28.50" y="125.77" width="7.51" height="1.35" fill="#e06c75"/><rect x="36.26" y="125.77" width="0.86" height="1.35" fill="#abb2bf"/><rect x="37.37" y="125.77" width="16.38" height="1.35" fill="#e06c75"/><rect x="55.11" y="125.77" width="1.97" height="1.35" fill="#abb2bf"/><rect x="12.97" y="128.00" width="0.86" height="1.35" fill="#7f848e"/><rect x="15.19" y="128.00" width="4.19" height="1.35" fill="#7f848e"/><rect x="20.73" y="128.00" width="3.08" height="1.35" fill="#abb2bf"/><rect x="25.17" y="128.00" width="7.51" height="1.35" fill="#e06c75"/><rect x="32.93" y="128.00" width="0.86" height="1.35" fill="#7f848e"/><rect x="34.04" y="128.00" width="24.15" height="1.35" fill="#e06c75"/><rect x="59.55" y="128.00" width="1.97" height="1.35" fill="#abb2bf"/><rect x="12.97" y="130.24" width="8.62" height="1.35" fill="#e06c75"/><rect x="21.84" y="130.24" width="0.86" height="1.35" fill="#abb2bf"/><rect x="24.06" y="130.24" width="3.08" height="1.35" fill="#abb2bf"/><rect x="28.50" y="130.24" width="7.51" height="1.35" fill="#e06c75"/><rect x="36.26" y="130.24" width="0.86" height="1.35" fill="#abb2bf"/><rect x="37.37" y="130.24" width="16.38" height="1.35" fill="#e06c75"/><rect x="55.11" y="130.24" width="1.97" height="1.35" fill="#abb2bf"/><rect x="12.97" y="132.47" width="6.40" height="1.35" fill="#e06c75"/><rect x="19.63" y="132.47" width="0.86" height="1.35" fill="#abb2bf"/><rect x="21.84" y="132.47" width="0.86" height="1.35" fill="#c678dd"/><rect x="15.19" y="134.71" width="6.40" height="1.35" fill="#98c379"/><rect x="22.95" y="134.71" width="21.93" height="1.35" fill="#98c379"/><rect x="45.13" y="134.71" width="3.08" height="1.35" fill="#abb2bf"/><rect x="49.57" y="134.71" width="7.51" height="1.35" fill="#e06c75"/><rect x="57.33" y="134.71" width="0.86" height="1.35" fill="#98c379"/><rect x="58.44" y="134.71" width="20.82" height="1.35" fill="#e06c75"/><rect x="80.62" y="134.71" width="1.97" height="1.35" fill="#abb2bf"/><rect x="15.19" y="136.95" width="6.40" height="1.35" fill="#98c379"/><rect x="22.95" y="136.95" width="8.62" height="1.35" fill="#98c379"/><rect x="31.82" y="136.95" width="3.08" height="1.35" fill="#abb2bf"/><rect x="36.26" y="136.95" width="7.51" height="1.35" fill="#e06c75"/><rect x="44.02" y="136.95" width="0.86" height="1.35" fill="#98c379"/><rect x="45.13" y="136.95" width="7.51" height="1.35" fill="#e06c75"/><rect x="54.00" y="136.95" width="1.97" height="1.35" fill="#abb2bf"/><rect x="15.19" y="139.18" width="7.51" height="1.35" fill="#98c379"/><rect x="24.06" y="139.18" width="6.40" height="1.35" fill="#98c379"/><rect x="31.82" y="139.18" width="5.29" height="1.35" fill="#98c379"/><rect x="38.48" y="139.18" width="1.97" height="1.35" fill="#98c379"/><rect x="41.81" y="139.18" width="3.08" height="1.35" fill="#abb2bf"/><rect x="46.24" y="139.18" width="7.51" height="1.35" fill="#e06c75"/><rect x="54.00" y="139.18" width="0.86" height="1.35" fill="#98c379"/><rect x="55.11" y="139.18" width="20.82" height="1.35" fill="#e06c75"/><rect x="77.29" y="139.18" width="1.97" height="1.35" fill="#abb2bf"/><rect x="80.62" y="139.18" width="1.97" height="1.35" fill="#98c379"/><rect x="83.95" y="139.18" width="3.08" height="1.35" fill="#abb2bf"/><rect x="88.38" y="139.18" width="7.51" height="1.35" fill="#e06c75"/><rect x="96.15" y="139.18" width="0.86" height="1.35" fill="#98c379"/><rect x="15.19" y="141.42" width="25.26" height="1.35" fill="#e06c75"/><rect x="41.81" y="141.42" width="1.97" height="1.35" fill="#abb2bf"/><rect x="15.19" y="143.65" width="7.51" height="1.35" fill="#98c379"/><rect x="24.06" y="143.65" width="15.28" height="1.35" fill="#98c379"/><rect x="40.70" y="143.65" width="4.19" height="1.35" fill="#98c379"/><rect x="15.19" y="145.89" width="7.51" height="1.35" fill="#98c379"/><rect x="24.06" y="145.89" width="15.28" height="1.35" fill="#98c379"/><rect x="40.70" y="145.89" width="5.29" height="1.35" fill="#98c379"/><rect x="47.35" y="145.89" width="10.84" height="1.35" fill="#98c379"/><rect x="15.19" y="148.13" width="7.51" height="1.35" fill="#98c379"/><rect x="24.06" y="148.13" width="6.40" height="1.35" fill="#98c379"/><rect x="31.82" y="148.13" width="5.29" height="1.35" fill="#98c379"/><rect x="38.48" y="148.13" width="5.29" height="1.35" fill="#98c379"/><rect x="45.13" y="148.13" width="1.97" height="1.35" fill="#98c379"/><rect x="48.46" y="148.13" width="1.97" height="1.35" fill="#98c379"/><rect x="15.19" y="150.36" width="7.51" height="1.35" fill="#98c379"/><rect x="24.06" y="150.36" width="15.28" height="1.35" fill="#98c379"/><rect x="40.70" y="150.36" width="1.97" height="1.35" fill="#98c379"/><rect x="44.02" y="150.36" width="1.97" height="1.35" fill="#98c379"/><rect x="47.35" y="150.36" width="17.49" height="1.35" fill="#98c379"/><rect x="6.32" y="154.83" width="9.73" height="1.35" fill="#e06c75"/><rect x="16.30" y="154.83" width="0.86" height="1.35" fill="#abb2bf"/><rect x="8.54" y="157.07" width="7.51" height="1.35" fill="#e06c75"/><rect x="16.30" y="157.07" width="0.86" height="1.35" fill="#abb2bf"/><rect x="18.52" y="157.07" width="14.17" height="1.35" fill="#98c379"/><rect x="8.54" y="161.54" width="5.29" height="1.35" fill="#e06c75"/><rect x="14.08" y="161.54" width="0.86" height="1.35" fill="#abb2bf"/><rect x="16.30" y="161.54" width="0.86" height="1.35" fill="#abb2bf"/><rect x="17.41" y="161.54" width="17.49" height="1.35" fill="#98c379"/><rect x="35.15" y="161.54" width="0.86" height="1.35" fill="#abb2bf"/><rect x="8.54" y="166.01" width="5.29" height="1.35" fill="#e06c75"/><rect x="14.08" y="166.01" width="0.86" height="1.35" fill="#abb2bf"/><rect x="10.75" y="168.25" width="0.86" height="1.35" fill="#abb2bf"/><rect x="12.97" y="168.25" width="1.97" height="1.35" fill="#e06c75"/><rect x="15.19" y="168.25" width="0.86" height="1.35" fill="#abb2bf"/><rect x="17.41" y="168.25" width="9.73" height="1.35" fill="#98c379"/><rect x="12.97" y="170.49" width="4.19" height="1.35" fill="#e06c75"/><rect x="17.41" y="170.49" width="0.86" height="1.35" fill="#abb2bf"/><rect x="19.63" y="170.49" width="9.73" height="1.35" fill="#98c379"/><rect x="12.97" y="172.72" width="4.19" height="1.35" fill="#e06c75"/><rect x="17.41" y="172.72" width="0.86" height="1.35" fill="#abb2bf"/><rect x="19.63" y="172.72" width="38.56" height="1.35" fill="#98c379"/><rect x="12.97" y="174.96" width="3.08" height="1.35" fill="#e06c75"/><rect x="16.30" y="174.96" width="0.86" height="1.35" fill="#abb2bf"/><rect x="15.19" y="177.19" width="13.06" height="1.35" fill="#e06c75"/><rect x="28.50" y="177.19" width="0.86" height="1.35" fill="#abb2bf"/><rect x="30.72" y="177.19" width="0.86" height="1.35" fill="#98c379"/><rect x="31.82" y="177.19" width="3.08" height="1.35" fill="#abb2bf"/><rect x="36.26" y="177.19" width="7.51" height="1.35" fill="#e06c75"/><rect x="44.02" y="177.19" width="0.86" height="1.35" fill="#abb2bf"/><rect x="45.13" y="177.19" width="13.06" height="1.35" fill="#e06c75"/><rect x="59.55" y="177.19" width="1.97" height="1.35" fill="#abb2bf"/><rect x="61.77" y="177.19" width="0.86" height="1.35" fill="#98c379"/><rect x="15.19" y="179.43" width="13.06" height="1.35" fill="#e06c75"/><rect x="28.50" y="179.43" width="0.86" height="1.35" fill="#abb2bf"/><rect x="30.72" y="179.43" width="1.97" height="1.35" fill="#98c379"/></svg>
<div id="sb">
<i style="position:absolute;left:0;top:180.700px;width:19px;height:1.200px;background:#1f2228"></i>
<i style="position:absolute;left:0;top:181.700px;width:19px;height:2px;background:#4d7fe0"></i>
<i style="position:absolute;left:5.600px;top:183.700px;width:7.400px;height:7.100px;background:#8d8d8d;box-shadow:0 0 1px #1d2025"></i>
<i style="position:absolute;left:5.600px;top:204.700px;width:7.400px;height:8px;background:#8d8d8d;box-shadow:0 0 1px #1d2025"></i>
<i style="position:absolute;left:-1px;top:254.800px;width:20px;height:259px;background:#3c414d"></i>
</div>
</div>
</body>
</html>
